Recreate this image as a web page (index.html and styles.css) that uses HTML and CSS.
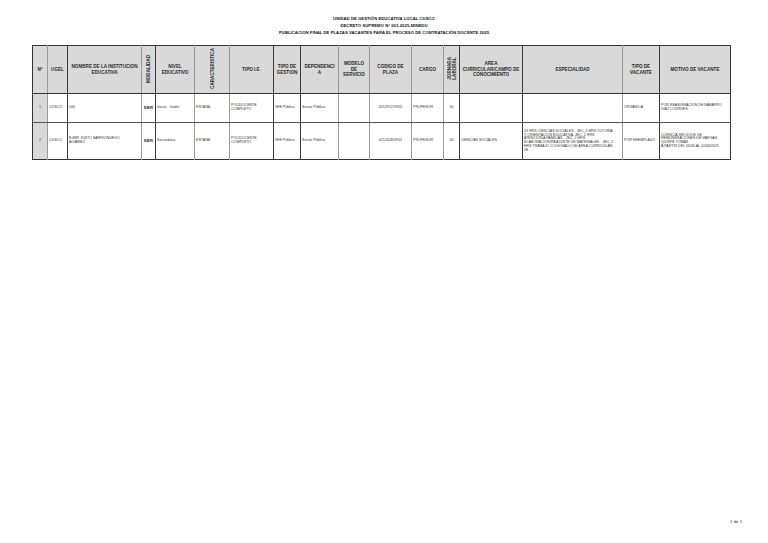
FILE: index.html
```html
<!DOCTYPE html>
<html lang="es">
<head>
<meta charset="utf-8">
<title>Plazas vacantes</title>
<link rel="stylesheet" href="styles.css">
</head>
<body>
<div class="page">
  <div class="titles">
    <div class="t">UNIDAD DE GESTIÓN EDUCATIVA LOCAL CUSCO</div>
    <div class="t">DECRETO SUPREMO N° 003-2025-MINEDU</div>
    <div class="t">PUBLICACION FINAL DE PLAZAS VACANTES PARA EL PROCESO DE CONTRATACIÓN DOCENTE 2025</div>
  </div>
  <table class="grid">
    <colgroup>
      <col class="c1 lt">
      <col class="c2 dk">
      <col class="c3 lt">
      <col class="c4 dk">
      <col class="c5 lt">
      <col class="c6 lt">
      <col class="c7 dk">
      <col class="c8 dk">
      <col class="c9 lt">
      <col class="c10 lt">
      <col class="c11 lt">
      <col class="c12 lt">
      <col class="c13 dk">
      <col class="c14 dk">
      <col class="c15 lt">
      <col class="c16 dk">
      <col class="c17 dk">
    </colgroup>
    <thead>
      <tr class="hrow">
        <th>Nº</th>
        <th>UGEL</th>
        <th>NOMBRE DE LA INSTITUCION<br>EDUCATIVA</th>
        <th><span class="vert">MODALIDAD</span></th>
        <th>NIVEL<br>EDUCATIVO</th>
        <th><span class="vert">CARACTERISTICA</span></th>
        <th>TIPO I.E.</th>
        <th>TIPO DE<br>GESTION</th>
        <th>DEPENDENCI<br>A</th>
        <th>MODELO<br>DE<br>SERVICIO</th>
        <th>CODIGO DE<br>PLAZA</th>
        <th>CARGO</th>
        <th><span class="vert">JORNADA<br>LABORAL</span></th>
        <th>AREA<br>CURRICULAR/CAMPO DE<br>CONOCIMIENTO</th>
        <th>ESPECIALIDAD</th>
        <th>TIPO DE<br>VACANTE</th>
        <th>MOTIVO DE VACANTE</th>
      </tr>
    </thead>
    <tbody>
      <tr class="r1">
        <td class="num">1</td>
        <td>CUSCO</td>
        <td>034</td>
        <td class="mod">EBR</td>
        <td>Inicial - Jardín</td>
        <td>ESTATAL</td>
        <td>POLIDOCENTE<br>COMPLETO</td>
        <td>IIEE Pública</td>
        <td>Sector Público</td>
        <td></td>
        <td class="ctr">421291219911</td>
        <td>PROFESOR</td>
        <td class="ctr">30</td>
        <td></td>
        <td></td>
        <td>ORGANICA</td>
        <td>POR REASIGNACION DE NAVARRO<br>DIAZ LOURDES</td>
      </tr>
      <tr class="r2">
        <td class="num">2</td>
        <td>CUSCO</td>
        <td>EGBR JUSTO BARRIONUEVO<br>ALVAREZ</td>
        <td class="mod">EBR</td>
        <td>Secundaria</td>
        <td>ESTATAL</td>
        <td>POLIDOCENTE<br>COMPLETO</td>
        <td>IIEE Pública</td>
        <td>Sector Público</td>
        <td></td>
        <td class="ctr">421241819911</td>
        <td>PROFESOR</td>
        <td class="ctr">30</td>
        <td>CIENCIAS SOCIALES</td>
        <td>24 HRS CIENCIAS SOCIALES - JEC, 2 HRS TUTORIA<br>Y ORIENTACION EDUCATIVA -JEC, 1 HRS<br>ATENCION A FAMILIAS - JEC, 2 HRS<br>ELABORACION/REAJUSTE DE MATERIALES - JEC, 1<br>HRS TRABAJO COLEGIADO DE AREA CURRICULAR-<br>JE</td>
        <td>POR REEMPLAZO</td>
        <td>LICENCIA SIN GOCE DE<br>REMUNERACIONES DE VARGAS<br>QUISPE TOMAS<br>A PARTIR DEL 05/05 AL 01/06/2025</td>
      </tr>
    </tbody>
  </table>
  <div class="pager">1 de 1</div>
</div>
</body>
</html>
```

FILE: styles.css
```css
html, body {
  margin: 0;
  padding: 0;
  background: #ffffff;
}

body {
  font-family: "Liberation Sans", Arial, sans-serif;
  color: #111;
}

.page {
  width: 768px;
  height: 543px;
  position: relative;
  padding: 15px 0 0 32px;
  box-sizing: border-box;
}

.titles {
  width: 704px;
  text-align: center;
  margin-bottom: 9px;
}

.titles .t {
  font-size: 4.2px;
  font-weight: bold;
  line-height: 7px;
  letter-spacing: 0.05px;
}

.grid {
  border-collapse: collapse;
  table-layout: fixed;
  width: 698px;
  border-top: 1px solid #333;
  border-bottom: 1px solid #333;
  border-left: 1px solid #333;
}

.c1 { width: 15px; }
.c2 { width: 20px; }
.c3 { width: 74px; }
.c4 { width: 14px; }
.c5 { width: 39px; }
.c6 { width: 35px; }
.c7 { width: 44px; }
.c8 { width: 27px; }
.c9 { width: 38px; }
.c10 { width: 31px; }
.c11 { width: 42px; }
.c12 { width: 32px; }
.c13 { width: 16px; }
.c14 { width: 63px; }
.c15 { width: 100px; }
.c16 { width: 37px; }
.c17 { width: 71px; }

col.lt { border-right: 1px solid #9a9a9a; }
col.dk { border-right: 1px solid #3a3a3a; }

th, td {
  padding: 0 1px;
  overflow: hidden;
  white-space: nowrap;
}

th {
  background: #d9d9d9;
  font-size: 4.6px;
  font-weight: bold;
  line-height: 5.8px;
  text-align: center;
  vertical-align: middle;
  color: #2a2a2a;
}

.hrow { height: 48px; }
.hrow th { border-bottom: 1px solid #333; }

.vert {
  display: inline-block;
  writing-mode: vertical-rl;
  transform: rotate(180deg);
  font-size: 4.6px;
  line-height: 5px;
}

td {
  font-size: 3.6px;
  line-height: 3.75px;
  vertical-align: middle;
  text-align: left;
  color: #333;
}

.r1 { height: 29px; }
.r1 td { border-bottom: 1px solid #555; }
.r2 { height: 37px; }

td.num {
  background: #d9d9d9;
  text-align: center;
}

td.ctr { text-align: center; }

td.mod {
  font-size: 4.2px;
  font-weight: bold;
  text-align: center;
  padding: 0;
}

.pager {
  position: absolute;
  left: 730px;
  top: 519px;
  font-size: 4.4px;
  color: #333;
}
```
